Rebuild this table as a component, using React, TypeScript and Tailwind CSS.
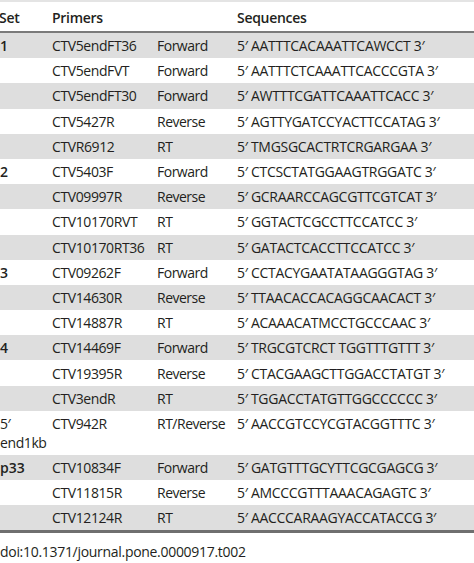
const rows: [string, string, string, string][] = [
  ["1", "CTV5endFT36", "Forward", "5′ AATTTCACAAATTCAWCCT 3′"],
  ["", "CTV5endFVT", "Forward", "5′ AATTTCTCAAATTCACCCGTA 3′"],
  ["", "CTV5endFT30", "Forward", "5′ AWTTTCGATTCAAATTCACC 3′"],
  ["", "CTV5427R", "Reverse", "5′ AGTTYGATCCYACTTCCATAG 3′"],
  ["", "CTVR6912", "RT", "5′ TMGSGCACTRTCRGARGAA 3′"],
  ["2", "CTV5403F", "Forward", "5′ CTCSCTATGGAAGTRGGATC 3′"],
  ["", "CTV09997R", "Reverse", "5′ GCRAARCCAGCGTTCGTCAT 3′"],
  ["", "CTV10170RVT", "RT", "5′ GGTACTCGCCTTCCATCC 3′"],
  ["", "CTV10170RT36", "RT", "5′ GATACTCACCTTCCATCC 3′"],
  ["3", "CTV09262F", "Forward", "5′ CCTACYGAATATAAGGGTAG 3′"],
  ["", "CTV14630R", "Reverse", "5′ TTAACACCACAGGCAACACT 3′"],
  ["", "CTV14887R", "RT", "5′ ACAAACATMCCTGCCCAAC 3′"],
  ["4", "CTV14469F", "Forward", "5′ TRGCGTCRCT TGGTTTGTTT 3′"],
  ["", "CTV19395R", "Reverse", "5′ CTACGAAGCTTGGACCTATGT 3′"],
  ["", "CTV3endR", "RT", "5′ TGGACCTATGTTGGCCCCCC 3′"],
  ["5′\nend1kb", "CTV942R", "RT/Reverse", "5′ AACCGTCCYCGTACGGTTTC 3′"],
  ["p33", "CTV10834F", "Forward", "5′ GATGTTTGCYTTCGCGAGCG 3′"],
  ["", "CTV11815R", "Reverse", "5′ AMCCCGTTTAAACAGAGTC 3′"],
  ["", "CTV12124R", "RT", "5′ AACCCARAAGYACCATACCG 3′"],
];

function Row({ r, i }: { r: [string, string, string, string]; i: number }) {
  const double = r[0].includes("\n");
  return (
    <div
      className={`grid grid-cols-[52px_105px_80px_1fr] leading-[19px] ${
        double ? "h-[44px] pt-[3px]" : "h-[25.2px] items-center"
      } ${i % 2 === 0 ? "bg-[#dedede]" : "bg-white"}`}
    >
      <span className={`whitespace-pre-line ${double ? "tracking-[-0.4px]" : "font-semibold"}`}>{r[0]}</span>
      <span className="tracking-[-0.4px]">{r[1]}</span>
      <span className="tracking-[-0.5px]">{r[2]}</span>
      <span className="tracking-[-0.3px]">{r[3]}</span>
    </div>
  );
}

export default function App() {
  return (
    <div className="w-[474px] h-[563px] bg-white text-[14px] text-[#231f20] font-['Open_Sans',sans-serif] overflow-hidden">
      <div className="h-[2px] bg-[#e4e4e4]" />
      <div className="grid grid-cols-[52px_105px_80px_1fr] h-[31px] pt-[1px] items-center font-semibold tracking-[-0.3px] border-b-2 border-[#7a7a7a]">
        <span className="-ml-px">Set</span>
        <span>Primers</span>
        <span />
        <span>Sequences</span>
      </div>
      <div className="border-b-[3px] border-[#6f6f6f]">
        {rows.map((r, i) => (
          <Row key={i} r={r} i={i} />
        ))}
      </div>
      <p className="mt-[11px] leading-[16px] tracking-[-0.3px]">doi:10.1371/journal.pone.0000917.t002</p>
    </div>
  );
}
